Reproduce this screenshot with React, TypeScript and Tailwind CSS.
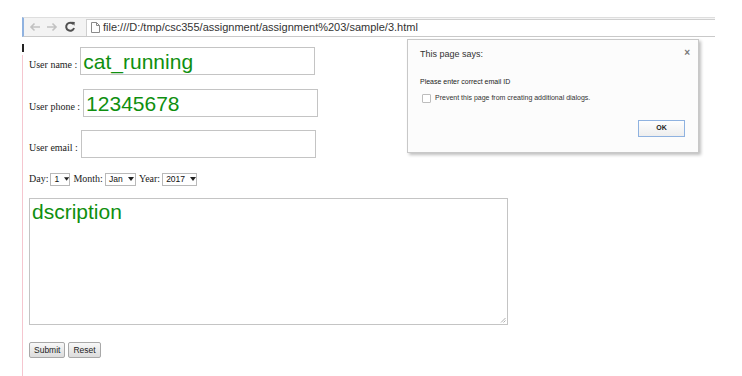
import React from "react";

const serif = { fontFamily: '"Liberation Serif", "Times New Roman", serif' };
const sans = { fontFamily: '"Liberation Sans", Arial, sans-serif' };

function Caret() {
  return (
    <svg width="6" height="4" viewBox="0 0 6 4" className="ml-[5px]">
      <path d="M0 0 L6 0 L3 4 Z" fill="#222" />
    </svg>
  );
}

function Select({ value, w }: { value: string; w: string }) {
  return (
    <span
      className={`inline-flex h-[13px] items-center border border-[#b9b9b9] bg-white pl-[3px] text-[8.5px] text-[#111] ${w}`}
      style={sans}
    >
      {value}
      <Caret />
    </span>
  );
}

function Field({
  label,
  value,
  gap,
}: {
  label: string;
  value?: string;
  gap: string;
}) {
  return (
    <div className="flex items-end">
      <span className="mb-[3px] text-[10px] text-[#222]" style={serif}>
        {label}
      </span>
      <div
        className={`flex h-[28px] w-[235px] items-center border border-[#c4c4c4] bg-white pl-[2px] pt-[1px] text-[21px] leading-none text-[#0f8f0f] ${gap}`}
        style={sans}
      >
        {value}
      </div>
    </div>
  );
}

export default function App() {
  return (
    <div className="relative h-[376px] w-[742px] overflow-hidden bg-white">
      {/* browser toolbar */}
      <div className="h-[17px]" />
      <div className="ml-[22px] flex h-[20px] w-[693px] items-center border-t border-b border-l-2 border-t-[#dedede] border-b-[#c9c9c9] border-l-[#8fb2e0] bg-[#f3f3f3]">
        <svg width="14" height="10" viewBox="0 0 14 10" className="ml-[4px]">
          <path d="M12 5 H3 M6.5 1.5 L3 5 L6.5 8.5" stroke="#c2c2c2" strokeWidth="1.6" fill="none" />
        </svg>
        <svg width="14" height="10" viewBox="0 0 14 10" className="ml-[3px]">
          <path d="M2 5 H11 M7.5 1.5 L11 5 L7.5 8.5" stroke="#c2c2c2" strokeWidth="1.6" fill="none" />
        </svg>
        <svg width="12" height="12" viewBox="0 0 12 12" className="ml-[5px]">
          <path d="M9.3 3.2 A4 4 0 1 0 10 7" stroke="#505050" strokeWidth="2" fill="none" />
          <path d="M7.2 0.8 L10.8 1 L10.4 4.8 Z" fill="#505050" />
        </svg>
        <div className="ml-[10px] flex h-[17px] flex-1 items-center border-l border-t border-[#cfcfcf] bg-white">
          <svg width="9" height="11" viewBox="0 0 9 11" className="ml-[4px]">
            <path d="M0.5 0.5 H5.5 L8.5 3.5 V10.5 H0.5 Z M5.5 0.5 V3.5 H8.5" stroke="#8a8a8a" fill="none" />
          </svg>
          <span className="ml-[3px] text-[11px] leading-none text-[#333]" style={sans}>
            file:///D:/tmp/csc355/assignment/assignment%203/sample/3.html
          </span>
        </div>
      </div>

      {/* page */}
      <div className="relative ml-[22px] h-[339px] pl-[7px]">
        <div className="absolute left-0 top-[7px] h-[8px] w-[2px] bg-[#222]" />
        <div className="absolute bottom-0 left-0 top-[18px] w-[1px] bg-[#f5c6cf]" />
        <div className="pt-[10px]">
          <Field label="User name :" value="cat_running" gap="ml-[3px]" />
          <div className="mt-[14px]">
            <Field label="User phone :" value="12345678" gap="ml-[3px]" />
          </div>
          <div className="mt-[13px]">
            <Field label="User email :" gap="ml-[3px]" />
          </div>
          <div className="mt-[13px] flex items-center text-[10px] text-[#222]" style={serif}>
            <span>Day:</span>
            <span className="ml-[2px]">
              <Select value="1" w="w-[20px]" />
            </span>
            <span className="ml-[3px]">Month:</span>
            <span className="ml-[2px]">
              <Select value="Jan" w="w-[31px]" />
            </span>
            <span className="ml-[3px]">Year:</span>
            <span className="ml-[2px]">
              <Select value="2017" w="w-[35px]" />
            </span>
          </div>
          <div
            className="relative mt-[12px] h-[127px] w-[479px] border border-[#c4c4c4] bg-white pl-[2px] pt-[2px] text-[21px] leading-none text-[#0f8f0f]"
            style={sans}
          >
            dscription
            <svg width="6" height="6" viewBox="0 0 6 6" className="absolute bottom-[1px] right-[1px]">
              <path d="M5.5 1 L1 5.5 M5.5 3.5 L3.5 5.5" stroke="#9a9a9a" strokeWidth="0.8" />
            </svg>
          </div>
          <div className="mt-[17px] flex gap-[3px]">
            <button
              className="h-[16px] rounded-[2px] border border-[#a8a8a8] bg-gradient-to-b from-[#f8f8f8] to-[#dcdcdc] px-[4px] text-[8.5px] leading-none text-[#222]"
              style={sans}
            >
              Submit
            </button>
            <button
              className="h-[16px] rounded-[2px] border border-[#a8a8a8] bg-gradient-to-b from-[#f8f8f8] to-[#dcdcdc] px-[4px] text-[8.5px] leading-none text-[#222]"
              style={sans}
            >
              Reset
            </button>
          </div>
        </div>
      </div>

      {/* alert dialog */}
      <div
        className="absolute left-[407px] top-[39px] h-[114px] w-[292px] border border-[#c8c8c8] bg-[#fcfcfc] shadow-[2px_2px_3px_rgba(0,0,0,0.25)]"
        style={sans}
      >
        <div className="absolute left-[12px] top-[8px] text-[9px] text-[#333]">This page says:</div>
        <div className="absolute right-[8px] top-[5px] text-[10px] font-bold text-[#777]">×</div>
        <div className="absolute left-[12px] top-[37px] text-[7px] text-[#222]">Please enter correct email ID</div>
        <div className="absolute left-[14px] top-[53px] flex items-center">
          <span className="h-[9px] w-[9px] rounded-[1px] border border-[#bdbdbd] bg-white" />
          <span className="ml-[4px] text-[7px] text-[#333]">Prevent this page from creating additional dialogs.</span>
        </div>
        <div className="absolute left-[230px] top-[80px] flex h-[17px] w-[47px] items-center justify-center border border-[#8fb2e0] bg-gradient-to-b from-[#fefefe] to-[#eeeeee] text-[7px] font-bold text-[#222]">
          OK
        </div>
      </div>
    </div>
  );
}
